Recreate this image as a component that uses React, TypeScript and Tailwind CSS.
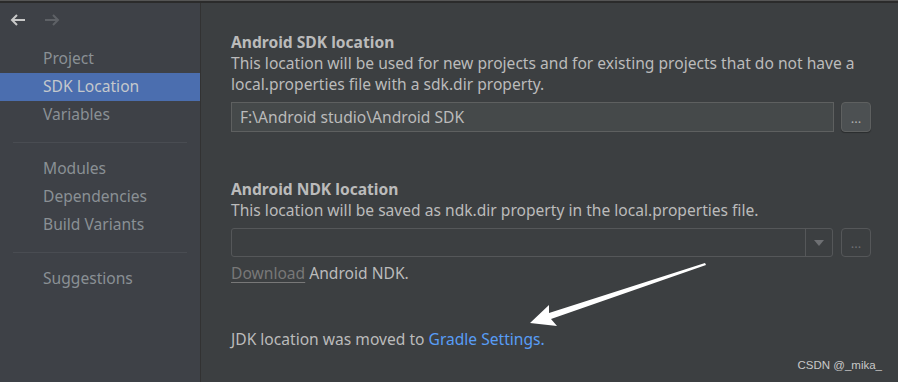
import React from "react";

const font = { fontFamily: '"Noto Sans", "Open Sans", sans-serif' };

function NavItem({ label, selected }: { label: string; selected?: boolean }) {
  return (
    <div
      className={
        "h-[28px] flex items-center pl-[43px] text-[15.6px] " +
        (selected ? "bg-[#4b6eaf] text-[#c4c8cc]" : "text-[#8a9095]")
      }
    >
      {label}
    </div>
  );
}

export default function App() {
  return (
    <div className="w-[898px] h-[382px] bg-[#3c3f41] flex flex-col overflow-hidden relative" style={font}>
      <div className="h-[1px] bg-[#555555]" />
      <div className="h-[2px] bg-[#2b2b2b]" />
      <div className="flex flex-1">
        {/* Sidebar */}
        <div className="w-[201px] bg-[#3e4147] border-r border-[#323232] flex flex-col">
          <div className="h-[33px] flex items-center gap-[16px] pl-[9px] pt-[1px]">
            <svg width="18" height="14" viewBox="0 0 18 14">
              <path d="M16 7H3M8 2L3 7l5 5" stroke="#c8c8c8" strokeWidth="2" fill="none" />
            </svg>
            <svg width="18" height="14" viewBox="0 0 18 14">
              <path d="M2 7h13M10 2l5 5-5 5" stroke="#5e6166" strokeWidth="2" fill="none" />
            </svg>
          </div>
          <div className="h-[9px]" />
          <NavItem label="Project" />
          <NavItem label="SDK Location" selected />
          <NavItem label="Variables" />
          <div className="h-[13px]" />
          <div className="mx-[13px] h-[1px] bg-[#494c52]" />
          <div className="h-[12px]" />
          <NavItem label="Modules" />
          <NavItem label="Dependencies" />
          <NavItem label="Build Variants" />
          <div className="h-[13px]" />
          <div className="mx-[13px] h-[1px] bg-[#494c52]" />
          <div className="h-[12px]" />
          <NavItem label="Suggestions" />
        </div>

        {/* Main */}
        <div className="flex-1 pl-[30px] pr-[26px] pt-[29px] text-[15.6px] text-[#bbbbbb] leading-[21px]">
          <div className="font-bold">Android SDK location</div>
          <div className="whitespace-nowrap">This location will be used for new projects and for existing projects that do not have a</div>
          <div>local.properties file with a sdk.dir property.</div>
          <div className="flex gap-[7px] mt-[7px]">
            <div className="w-[603px] h-[30px] bg-[#45494a] border border-[#5e6060] flex items-center pl-[8px] text-[#bbbbbb]">
              F:\Android studio\Android SDK
            </div>
            <div className="w-[30px] h-[30px] rounded-[4px] bg-[#4c5052] border border-[#5e6060] flex items-center justify-center text-[#b0b0b0] text-[13px] leading-none pt-[2px] shadow-[0_1px_1px_rgba(0,0,0,0.3)]">
              ...
            </div>
          </div>

          <div className="h-[47px]" />
          <div className="font-bold">Android NDK location</div>
          <div>This location will be saved as ndk.dir property in the local.properties file.</div>
          <div className="flex gap-[8px] mt-[7px]">
            <div className="w-[602px] h-[29px] border border-[#555759] rounded-[3px] flex">
              <div className="flex-1" />
              <div className="w-[27px] border-l border-[#555759] flex items-center justify-center">
                <svg width="10" height="6" viewBox="0 0 10 6">
                  <path d="M0 0h10L5 6z" fill="#6e7073" />
                </svg>
              </div>
            </div>
            <div className="w-[30px] h-[29px] rounded-[4px] border border-[#555759] flex items-center justify-center text-[#6e7073] text-[13px] leading-none pt-[2px]">
              ...
            </div>
          </div>
          <div className="mt-[6px]">
            <span className="text-[#787878] underline underline-offset-[3px] decoration-[#787878]">Download</span>{" "}
            <span>Android NDK.</span>
          </div>

          <div className="h-[45px]" />
          <div>
            JDK location was moved to <span className="text-[#589df6]">Gradle Settings.</span>
          </div>
        </div>
      </div>

      {/* annotation arrow */}
      <svg className="absolute left-0 top-0 pointer-events-none" width="898" height="382" viewBox="0 0 898 382">
        <path d="M705 263 L549 313 L549 305 L530 323 L557 326 L551 319 L706 265 Z" fill="#ffffff" />
      </svg>

      <div className="absolute right-[16px] bottom-[8px] text-[11.5px] text-[#c8c8c8]" style={{ fontFamily: '"Liberation Sans", Arial, sans-serif' }}>
        CSDN @_mika_
      </div>
    </div>
  );
}
